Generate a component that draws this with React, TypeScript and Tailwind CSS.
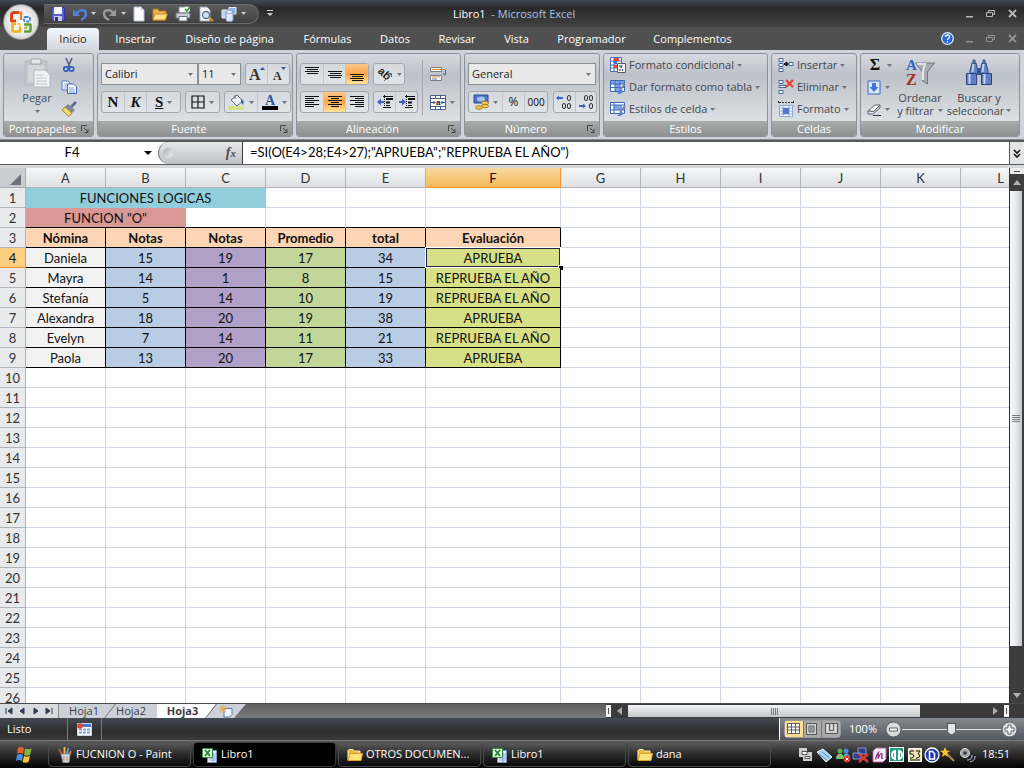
import { useState, type ReactNode } from 'react'
import clsx from 'clsx'

const UI_FONT = "font-['Open_Sans','Noto_Sans',sans-serif]"
const SHEET_FONT = "font-['Lato','Open_Sans',sans-serif]"

const TABS = [
  { label: 'Inicio', width: 'w-[52px]' },
  { label: 'Insertar', width: 'w-[63px]' },
  { label: 'Diseño de página', width: 'w-[115px]' },
  { label: 'Fórmulas', width: 'w-[71px]' },
  { label: 'Datos', width: 'w-[54px]' },
  { label: 'Revisar', width: 'w-[60px]' },
  { label: 'Vista', width: 'w-[49px]' },
  { label: 'Programador', width: 'w-[91px]' },
  { label: 'Complementos', width: 'w-[101px]' },
]

const COLUMNS = ['A', 'B', 'C', 'D', 'E', 'F', 'G', 'H', 'I', 'J', 'K', 'L']

const HEADINGS = ['Nómina', 'Notas', 'Notas', 'Promedio', 'total', 'Evaluación']

const STUDENTS = [
  ['Daniela', '15', '19', '17', '34', 'APRUEBA'],
  ['Mayra', '14', '1', '8', '15', 'REPRUEBA EL AÑO'],
  ['Stefanía', '5', '14', '10', '19', 'REPRUEBA EL AÑO'],
  ['Alexandra', '18', '20', '19', '38', 'APRUEBA'],
  ['Evelyn', '7', '14', '11', '21', 'REPRUEBA EL AÑO'],
  ['Paola', '13', '20', '17', '33', 'APRUEBA'],
]

const COLUMN_FILL = [
  'bg-[#f2f2f2]',
  'bg-[#b8cce4]',
  'bg-[#b1a0c7]',
  'bg-[#c2d69a]',
  'bg-[#b8cce4]',
  'bg-[#d7e087]',
]

const CELL = 'h-5 border-r border-b p-0 text-center align-middle'
const GRID_LINE = 'border-[#d0d7e5]'

/* ---------- small shared pieces ---------- */

function Caret({ className = 'text-[#70757d]' }: { className?: string }) {
  return (
    <svg width="5" height="3" viewBox="0 0 5 3" className={clsx('shrink-0', className)} aria-hidden="true">
      <path d="M0 0h5L2.500 3z" fill="currentColor" />
    </svg>
  )
}

function Icon({ w = 16, h = 16, children }: { w?: number; h?: number; children: ReactNode }) {
  return (
    <svg width={w} height={h} viewBox={`0 0 ${w} ${h}`} className="shrink-0" aria-hidden="true">
      {children}
    </svg>
  )
}

/* ---------- quick access icons ---------- */

function OfficeLogo() {
  return (
    <svg width="24" height="24" viewBox="0 0 24 24" fill="none" strokeLinejoin="round" aria-hidden="true">
      <path d="M10 2.500H5A2.500 2.500 0 0 0 2.500 5v6H7" stroke="#d8441b" strokeWidth="3" />
      <path d="M9.500 2.500h2.500v7.500" stroke="#ee7f2d" strokeWidth="2.400" />
      <rect x="15" y="7" width="6" height="4.500" rx="1.500" stroke="#3a82c8" strokeWidth="1.800" strokeDasharray="3 1" />
      <path d="M7 14H3.500v6A1.500 1.500 0 0 0 5 21.500h6V17" stroke="#f2b21d" strokeWidth="2.600" />
      <path d="M8 14h3v3" stroke="#f7cf62" strokeWidth="1.800" />
      <path d="M15 14.500h6.500V20a1.500 1.500 0 0 1-1.500 1.500h-5" stroke="#5f9f38" strokeWidth="2.600" />
      <path d="M15 18h2.500v-2" stroke="#a3c957" strokeWidth="1.800" />
    </svg>
  )
}

function SaveIcon() {
  return (
    <Icon>
      <path d="M1.500 1.500h13v13h-13z" fill="#5a5fc9" stroke="#3436a0" />
      <path d="M4 1h8v7H4z" fill="#f4f6ff" />
      <path d="M4 10h8v5H4z" fill="#c9cdf4" />
      <path d="M5 11h3v4H5z" fill="#2c2f86" />
    </Icon>
  )
}

function UndoIcon() {
  return (
    <Icon w={14}>
      <path d="M4 7c2-4 9-4 9 1 0 3-3 5-5 6" fill="none" stroke="#4f83dd" strokeWidth="2.400" />
      <path d="M0 3v7h7z" fill="#4f83dd" />
    </Icon>
  )
}

function RedoIcon() {
  return (
    <Icon w={14}>
      <path d="M10 7C8 3 1 3 1 8c0 3 3 5 5 6" fill="none" stroke="#9b9b9b" strokeWidth="2.400" />
      <path d="M13 3v7H6z" fill="#9b9b9b" />
    </Icon>
  )
}

function NewIcon() {
  return (
    <Icon w={12}>
      <path d="M1 1h7l3 3v11H1z" fill="#fff" stroke="#b4c0d3" />
      <path d="M8 1v3h3z" fill="#b7c6de" />
    </Icon>
  )
}

function FolderIcon() {
  return (
    <Icon>
      <path d="M1 3h5l1 2h7v9H1z" fill="#f0b545" stroke="#b67c1c" />
      <path d="M3 8h12.500L13 14H1z" fill="#ffe08a" stroke="#c58f2a" />
    </Icon>
  )
}

// Closed yellow folder used by Explorer windows
function ExplorerIcon() {
  return (
    <Icon>
      <path d="M1 3.500L2 2.500h4l1.500 1.500H13v9H1z" fill="#e9b73c" stroke="#fff3b5" />
      <path d="M3 6.500h12.500L14 13.500H1z" fill="#ffe37a" stroke="#d9a42e" />
    </Icon>
  )
}

function QuickPrintIcon() {
  return (
    <Icon>
      <path d="M4 1h7v6H4z" fill="#fff" stroke="#8a8f98" />
      <path d="M1 7h14v5H1z" fill="#c7ccd4" stroke="#6f7680" />
      <path d="M4 10.500h8v4.500H4z" fill="#f3f5f8" stroke="#6f7680" />
      <circle cx="12" cy="3.500" r="3" fill="#eef7ea" />
      <path d="M10 3l2 2 3-4" fill="none" stroke="#2e9a32" strokeWidth="1.500" />
    </Icon>
  )
}

function PreviewIcon() {
  return (
    <Icon>
      <path d="M2 1h7l3 3v11H2z" fill="#fff" stroke="#93a3bd" />
      <circle cx="8" cy="9" r="3.500" fill="#cfe2f8" stroke="#5a6f91" strokeWidth="1.300" />
      <path d="M11 12l4 3" stroke="#d09030" strokeWidth="2.400" />
    </Icon>
  )
}

function ShapesIcon() {
  return (
    <Icon>
      <path d="M1 4h6v8H1z" fill="#b9d1f3" stroke="#e6effc" />
      <path d="M8 1.500h7V8H8z" fill="#8fb3ea" stroke="#e6effc" />
      <path d="M5 6v8c0 2 7 2 7 0V6z" fill="#dce8fa" stroke="#7c9ccb" />
      <ellipse cx="8.500" cy="6" rx="3.500" ry="1.500" fill="#fff" stroke="#7c9ccb" />
    </Icon>
  )
}

function WindowButtons({ muted = false }: { muted?: boolean }) {
  return (
    <div className={clsx('flex items-center gap-3', muted ? 'text-[#929292]' : 'text-[#b8b8b8]')}>
      <button type="button" aria-label="Minimizar">
        <Icon w={8} h={10}>
          <path d="M0 7h7v1.500H0z" fill="currentColor" />
        </Icon>
      </button>
      <button type="button" aria-label="Restaurar">
        <Icon w={10} h={10}>
          <path d="M2.500 3V1.500h6v4H7M.5 3.500h6v4h-6z" fill="none" stroke="currentColor" />
        </Icon>
      </button>
      <button type="button" aria-label="Cerrar">
        <Icon w={9} h={10}>
          <path d="M1 1l7 7M8 1L1 8" stroke="currentColor" strokeWidth="1.800" />
        </Icon>
      </button>
    </div>
  )
}

function TitleBar() {
  const quick = [
    { name: 'Guardar', icon: <SaveIcon /> },
    { name: 'Deshacer', icon: <UndoIcon />, caret: true },
    { name: 'Rehacer', icon: <RedoIcon />, caret: true },
    { name: 'Nuevo', icon: <NewIcon /> },
    { name: 'Abrir', icon: <FolderIcon /> },
    { name: 'Impresión rápida', icon: <QuickPrintIcon /> },
    { name: 'Vista preliminar', icon: <PreviewIcon /> },
    { name: 'Formas', icon: <ShapesIcon />, caret: true },
  ]
  return (
    <div className="flex h-[27px] shrink-0 items-center bg-linear-to-b from-[#414855] via-[#292929] via-30% to-[#434343] pr-[7px] pl-11">
      <div className="flex h-5 items-center gap-[7px] rounded-r-full border border-l-0 border-[#6a6a6a] bg-linear-to-b from-[#5b5b5b] to-[#414141] pr-3 pl-1.5">
        {quick.map(({ name, icon, caret }) => (
          <button key={name} type="button" aria-label={name} className="flex items-center gap-1">
            {icon}
            {caret && <Caret className="text-[#d0d0d0]" />}
          </button>
        ))}
      </div>
      <button type="button" aria-label="Personalizar barra" className="ml-2">
        <Icon w={6} h={7}>
          <path d="M0 0h6v1H0zM0 3h6L3 6z" fill="#d0d0d0" />
        </Icon>
      </button>
      <h1 className="mr-auto ml-[180px] pt-0.5 text-[11px] whitespace-nowrap text-white">
        Libro1 <span className="text-[#a9c3ec]">&nbsp;- Microsoft Excel</span>
      </h1>
      <WindowButtons />
    </div>
  )
}

function TabStrip() {
  const [active, setActive] = useState('Inicio')
  return (
    <nav className="flex h-[23px] shrink-0 items-end bg-[#505050] pr-[7px] pl-[47px]">
      <div role="tablist" className="flex gap-[5px]">
        {TABS.map(({ label, width }) => (
          <button
            key={label}
            type="button"
            role="tab"
            aria-selected={active === label}
            onClick={() => setActive(label)}
            className={clsx(
              'h-[22px] rounded-t text-[11px] whitespace-nowrap',
              width,
              active === label
                ? 'bg-linear-to-b from-[#f4f7fa] to-[#d3d7de] text-[#1e1e1e]'
                : 'text-white',
            )}
          >
            {label}
          </button>
        ))}
      </div>
      <div className="ml-auto flex items-center gap-3 self-center">
        <button type="button" aria-label="Ayuda">
          <Icon w={13} h={13}>
            <circle cx="6.500" cy="6.500" r="5.800" fill="#2c66cf" stroke="#e8f0ff" strokeWidth="1.200" />
            <path d="M4.500 5c0-2.600 4-2.600 4 0 0 1.500-2 1.500-2 3" fill="none" stroke="#fff" strokeWidth="1.400" />
            <path d="M5.800 9h1.400v1.400H5.800z" fill="#fff" />
          </Icon>
        </button>
        <WindowButtons muted />
      </div>
    </nav>
  )
}

/* ---------- ribbon ---------- */

type GroupProps = { title: string; width: string; launcher?: boolean; children: ReactNode }

function RibbonGroup({ title, width, launcher, children }: GroupProps) {
  return (
    <section
      aria-label={title}
      className={clsx(
        'flex h-[84px] shrink-0 flex-col overflow-hidden rounded-[3px] border border-[#8d9299] bg-linear-to-b from-[#d6d9df] via-[#bdc1ca] via-25% to-[#e6ebec]',
        width,
      )}
    >
      <div className="flex min-h-0 flex-1">{children}</div>
      <div className="flex h-[15px] shrink-0 items-center bg-linear-to-b from-[#a9acab] to-[#8e9190] text-[11px] text-white">
        <span className="flex-1 text-center leading-[15px]">{title}</span>
        {launcher && (
          <button type="button" aria-label={`Opciones de ${title}`} className="mr-1">
            <Icon w={8} h={8}>
              <path d="M.5 6V.5H6M3 3l4 4M7 4v3.500H3.500" fill="none" stroke="#45484b" />
            </Icon>
          </button>
        )}
      </div>
    </section>
  )
}

function ButtonBox({ width, children }: { width: string; children: ReactNode }) {
  return (
    <div
      className={clsx(
        'flex h-[22px] shrink-0 divide-x divide-[#c3c7cd] overflow-hidden rounded-[3px] border border-[#a3a8b0] bg-linear-to-b from-[#d5d9de] to-[#dfe5e8]',
        width,
      )}
    >
      {children}
    </div>
  )
}

type ToolProps = { name: string; on?: boolean; caret?: boolean; children: ReactNode }

function Tool({ name, on, caret, children }: ToolProps) {
  return (
    <button
      type="button"
      aria-label={name}
      aria-pressed={on}
      className={clsx(
        'flex min-w-0 items-center justify-center',
        caret ? 'flex-[3] gap-1' : 'flex-[2]',
        on && 'bg-linear-to-b from-[#fbc98a] via-[#fba548] to-[#fee59a]',
      )}
    >
      {children}
      {caret && <Caret />}
    </button>
  )
}

function Combo({ label, value, width }: { label: string; value: string; width: string }) {
  return (
    <div className={clsx('flex h-[22px] shrink-0 items-center border border-[#8b8f96] bg-[#e8e8e8] pr-1', width)}>
      <select
        aria-label={label}
        className="h-full min-w-0 flex-1 appearance-none pl-[3px] text-[11px] text-[#1e1e1e] outline-none"
      >
        <option>{value}</option>
      </select>
      <Caret />
    </div>
  )
}

function Lines({ rows, top = 0 }: { rows: [number, number][]; top?: number }) {
  return (
    <Icon w={14} h={14}>
      {rows.map(([x, w], i) => (
        <rect key={i} x={x} y={top + i * 2} width={w} height="1" fill="#111" />
      ))}
    </Icon>
  )
}

function Indent({ right }: { right?: boolean }) {
  return (
    <Icon w={16} h={14}>
      <path d="M6 1.500h10M9 10.500h4M6 12.500h8" stroke="#111" />
      <path d="M9 4h7M9 7.500h4" stroke="#111" strokeWidth="2" />
      <path d="M7.500 0v14" stroke="#111" strokeDasharray="1 1" />
      {right ? (
        <path d="M0 6h3V3.500l4 3.500-4 3.500V8H0z" fill="#3c63c4" />
      ) : (
        <path d="M7 6H4V3.500L0 7l4 3.500V8h3z" fill="#3c63c4" />
      )}
    </Icon>
  )
}

function Clipboard() {
  return (
    <RibbonGroup title="Portapapeles" width="w-[91px]" launcher>
      <button type="button" className="ml-[14px] flex w-[38px] flex-col items-center pt-1 text-[11px] text-[#4a4d52]">
        <Icon w={28} h={30}>
          <path d="M2 3h22v24H2z" fill="#c3c7cc" stroke="#b4b8be" />
          <path d="M8 1h10v5H8z" fill="#e4e6e9" stroke="#9da1a8" />
          <path d="M5 7h16v17H5z" fill="#d3d6da" />
          <path d="M11 12h11l5 5v12H11z" fill="#f2f3f5" stroke="#b4b8be" />
          <path d="M13 17h7M13 20h11M13 23h11M13 26h11" stroke="#c0c4ca" />
        </Icon>
        <span className="mt-0.5 leading-4">Pegar</span>
        <Caret className="mt-1 text-[#70757d]" />
      </button>
      <div className="ml-[5px] flex flex-col items-center">
        <button type="button" aria-label="Cortar" className="flex h-[22px] items-center">
          <Icon w={16} h={16}>
            <path d="M5 1l4 9M11 1L7 10" stroke="#55617a" strokeWidth="1.600" />
            <circle cx="5" cy="12" r="2.200" fill="none" stroke="#2f5fc0" strokeWidth="1.700" />
            <circle cx="10.500" cy="12" r="2.200" fill="none" stroke="#2f5fc0" strokeWidth="1.700" />
          </Icon>
        </button>
        <button type="button" aria-label="Copiar" className="flex h-[22px] items-center">
          <Icon w={16} h={14}>
            <path d="M1 1h6l2 2v7H1z" fill="#fff" stroke="#4a74c4" />
            <path d="M2.500 4h5M2.500 6h5M2.500 8h5" stroke="#8aaae2" />
            <path d="M6.500 4h6l3 3v6.500h-9z" fill="#fff" stroke="#3563bd" />
            <path d="M8 8h5M8 10h6M8 12h6" stroke="#6f96dc" />
          </Icon>
        </button>
        <button type="button" aria-label="Copiar formato" className="flex h-[22px] items-center">
          <Icon w={16} h={16}>
            <path d="M15 1l-5 5" stroke="#586a90" strokeWidth="2.600" />
            <path d="M7 3l7 6-3 3-7-6z" fill="#7f88a0" />
            <path d="M4 6l7 6-3 3.500L1 9z" fill="#f5d96b" stroke="#a5842a" />
          </Icon>
        </button>
      </div>
    </RibbonGroup>
  )
}

function FontGroup() {
  return (
    <RibbonGroup title="Fuente" width="w-[196px]" launcher>
      <div className="flex flex-col gap-1.5 pt-[9px] pl-[3px]">
        <div className="flex gap-1">
          <div className="flex">
            <Combo label="Fuente" value="Calibri" width="w-[97px]" />
            <Combo label="Tamaño de fuente" value="11" width="w-[43px]" />
          </div>
          <ButtonBox width="w-[45px]">
            <Tool name="Aumentar tamaño">
              <Icon w={18} h={16}>
                <text x="1" y="14" fontSize="16" fontWeight="700" fontFamily="Liberation Serif, serif" fill="#333">A</text>
                <path d="M12 4h5l-2.500-3z" fill="#35549b" />
              </Icon>
            </Tool>
            <Tool name="Disminuir tamaño">
              <Icon w={16} h={16}>
                <text x="2" y="14" fontSize="12" fontWeight="700" fontFamily="Liberation Serif, serif" fill="#333">A</text>
                <path d="M10 1h5l-2.500 3z" fill="#35549b" />
              </Icon>
            </Tool>
          </ButtonBox>
        </div>
        <div className="flex gap-1 font-['Liberation_Serif',serif] text-[15px] leading-4 text-[#111]">
          <ButtonBox width="w-20">
            <Tool name="Negrita"><b>N</b></Tool>
            <Tool name="Cursiva"><b className="italic">K</b></Tool>
            <Tool name="Subrayado" caret><b className="underline">S</b></Tool>
          </ButtonBox>
          <ButtonBox width="w-[35px]">
            <Tool name="Bordes" caret>
              <Icon w={14} h={14}>
                <path d="M1 1h12v12H1zM7 1v12M1 7h12" fill="none" stroke="#111" strokeWidth="1.200" />
              </Icon>
            </Tool>
          </ButtonBox>
          <ButtonBox width="w-[67px]">
            <Tool name="Color de relleno" caret>
              <Icon w={17} h={16}>
                <path d="M3 6l6-5 6 6-6 5z" fill="#eef2f8" stroke="#5d6a83" />
                <path d="M7 5V1" stroke="#5d6a83" />
                <path d="M13 5c3 1 3 3 2 6l-2-3z" fill="#315db8" />
                <path d="M0 12h16v4H0z" fill="#d7e087" />
              </Icon>
            </Tool>
            <Tool name="Color de fuente" caret>
              <Icon w={16} h={16}>
                <text x="3" y="11" fontSize="14" fontWeight="700" fontFamily="Liberation Serif, serif" fill="#35549b">A</text>
                <path d="M0 12h16v4H0z" fill="#000" />
              </Icon>
            </Tool>
          </ButtonBox>
        </div>
      </div>
    </RibbonGroup>
  )
}

function AlignGroup() {
  return (
    <RibbonGroup title="Alineación" width="w-[165px]" launcher>
      <div className="flex flex-col gap-1.5 pt-[9px] pl-[3px]">
        <div className="flex gap-1">
          <ButtonBox width="w-[69px]">
            <Tool name="Alinear arriba"><Lines rows={[[0, 14], [2, 11], [0, 14], [2, 11]]} /></Tool>
            <Tool name="Alinear al medio"><Lines top={4} rows={[[0, 14], [2, 11], [0, 14], [2, 11]]} /></Tool>
            <Tool name="Alinear abajo" on><Lines top={7} rows={[[0, 14], [2, 11], [0, 14], [2, 11]]} /></Tool>
          </ButtonBox>
          <ButtonBox width="w-8">
            <Tool name="Orientación" caret>
              <Icon w={16} h={16}>
                <text x="0" y="9" fontSize="11" fontWeight="700" fontFamily="Liberation Sans, sans-serif" fill="#222" transform="rotate(42 4 8)">
                  ab
                </text>
                <path d="M7 15l7-7M14.500 11V7.500H11" stroke="#666" fill="none" />
              </Icon>
            </Tool>
          </ButtonBox>
        </div>
        <div className="flex gap-1">
          <ButtonBox width="w-[69px]">
            <Tool name="Izquierda"><Lines top={1} rows={[[0, 14], [0, 9], [0, 14], [0, 9], [0, 14], [0, 9]]} /></Tool>
            <Tool name="Centrar" on><Lines top={1} rows={[[0, 14], [3, 8], [0, 14], [3, 8], [0, 14], [3, 8]]} /></Tool>
            <Tool name="Derecha"><Lines top={1} rows={[[0, 14], [5, 9], [0, 14], [5, 9], [0, 14], [5, 9]]} /></Tool>
          </ButtonBox>
          <ButtonBox width="w-[45px]">
            <Tool name="Disminuir sangría"><Indent /></Tool>
            <Tool name="Aumentar sangría"><Indent right /></Tool>
          </ButtonBox>
        </div>
      </div>
      <div className="my-1.5 ml-1 flex flex-col gap-1.5 border-l border-[#a5a9b0] pt-[3px] pl-[7px]">
        <button type="button" aria-label="Ajustar texto" className="flex h-[22px] items-center">
          <Icon w={16} h={16}>
            <path d="M.5 1.500h11v4H.5zM.5 9.500h11v5H.5z" fill="#fff" stroke="#777d88" />
            <path d="M2 3.500h13M2 11h8" stroke="#d38b3c" />
            <path d="M2 13h5" stroke="#5c77a8" />
            <path d="M15.500 4v5M13 7l2 2.500" stroke="#4c6491" fill="none" />
          </Icon>
        </button>
        <button type="button" aria-label="Combinar y centrar" className="flex h-[22px] items-center gap-1">
          <Icon w={16} h={15}>
            <path d="M.5.5h15v14H.5zM.5 3.500h15M.5 11.500h15M5.500.5v3M10.500.5v3M5.500 11.500v3M10.500 11.500v3" fill="#fff" stroke="#4c5f86" />
            <path d="M1 7.500h4M15 7.500h-4M3.500 6L5 7.500 3.500 9M12.500 6L11 7.500l1.500 1.500" fill="none" stroke="#294b94" />
            <text x="6" y="10" fontSize="8" fontWeight="700" fontFamily="Liberation Sans, sans-serif" fill="#111">a</text>
          </Icon>
          <Caret />
        </button>
      </div>
    </RibbonGroup>
  )
}

function NumberGroup() {
  return (
    <RibbonGroup title="Número" width="w-[136px]" launcher>
      <div className="flex flex-col gap-1.5 pt-[9px] pl-[3px]">
        <Combo label="Formato de número" value="General" width="w-32" />
        <div className="flex gap-1 text-[#222]">
          <ButtonBox width="w-20">
            <Tool name="Formato de contabilidad" caret>
              <Icon w={16} h={16}>
                <path d="M1 1h14v8H1z" fill="#4d77c8" stroke="#2b4b91" />
                <ellipse cx="8" cy="5" rx="4" ry="2.500" fill="#a9c1ee" />
                <ellipse cx="12" cy="9" rx="3.500" ry="1.800" fill="#f4cf61" stroke="#a67a1b" />
                <ellipse cx="12" cy="12" rx="3.500" ry="1.800" fill="#f4cf61" stroke="#a67a1b" />
                <ellipse cx="6" cy="13.500" rx="3.500" ry="1.800" fill="#f4cf61" stroke="#a67a1b" />
              </Icon>
            </Tool>
            <Tool name="Estilo porcentual"><span className="text-xs">%</span></Tool>
            <Tool name="Estilo millares">
              <span className="font-['Liberation_Sans_Narrow','Noto_Sans',sans-serif] text-[10px]">000</span>
            </Tool>
          </ButtonBox>
          <div className="ml-px">
            <ButtonBox width="w-11">
              <Tool name="Aumentar decimales">
                <Icon w={16} h={16}>
                  <path d="M0 4l3-2.500V3h4v2H3v1.500z" fill="#3c63c4" />
                  <g fill="none" stroke="#333">
                    <rect x="11.500" y="1.500" width="3" height="5" rx="1.500" />
                    <rect x="6.500" y="9.500" width="3" height="5" rx="1.500" />
                    <rect x="11.500" y="9.500" width="3" height="5" rx="1.500" />
                  </g>
                </Icon>
              </Tool>
              <Tool name="Disminuir decimales">
                <Icon w={16} h={16}>
                  <path d="M8 12l-3-2.500V11H1v2h4v1.500z" fill="#3c63c4" />
                  <g fill="none" stroke="#333">
                    <rect x="6.500" y="1.500" width="3" height="5" rx="1.500" />
                    <rect x="11.500" y="1.500" width="3" height="5" rx="1.500" />
                    <rect x="11.500" y="9.500" width="3" height="5" rx="1.500" />
                  </g>
                </Icon>
              </Tool>
            </ButtonBox>
          </div>
        </div>
      </div>
    </RibbonGroup>
  )
}

function RowButton({ icon, label }: { icon: ReactNode; label: string }) {
  return (
    <button type="button" className="flex h-[22px] items-center gap-[3px] text-[11px] whitespace-nowrap text-[#44474c]">
      {icon}
      <span>{label}</span>
      <Caret className="text-[#70757d]" />
    </button>
  )
}

function StylesGroup() {
  return (
    <RibbonGroup title="Estilos" width="w-[165px]">
      <div className="flex flex-col pl-1.5">
        <RowButton
          label="Formato condicional"
          icon={
            <Icon>
              <path d="M.5.5h11v14H.5zM.5 4h11M.5 8h11M.5 11h11M4 .5v14" fill="#fff" stroke="#4a6fb5" />
              <path d="M4 1h5v3H4z" fill="#d84a3e" />
              <path d="M4 4h3v3H4z" fill="#3f70cf" />
              <path d="M4 8h4v3H4z" fill="#d84a3e" />
              <path d="M7.500 6.500h8v9h-8z" fill="#f5f6f8" stroke="#555b66" />
              <path d="M9 9h2M12 8l-1 3M9 13h2M13 12l-1 2" stroke="#333" />
            </Icon>
          }
        />
        <RowButton
          label="Dar formato como tabla"
          icon={
            <Icon>
              <path d="M.5 1.500h14v11H.5z" fill="#fff" stroke="#3c68b8" />
              <path d="M1 2h13v3H1zM5 5h5v7H5z" fill="#7ea4e4" />
              <path d="M.5 5h14M.5 8.500h14M5 1.500v11M10 1.500v11" stroke="#3c68b8" />
              <path d="M15 5l-5 6" stroke="#7a879e" strokeWidth="2" />
              <path d="M11 10l2 2c-1 3-3 3-6 3 2-1 2-4 4-5z" fill="#4f83dd" />
            </Icon>
          }
        />
        <RowButton
          label="Estilos de celda"
          icon={
            <Icon>
              <path d="M.5 1.500h14v11H.5z" fill="#fff" stroke="#3c68b8" />
              <path d="M4 4h8v5H4z" fill="#7ea4e4" />
              <path d="M.5 4h14M.5 9h14M4 1.500v11" stroke="#3c68b8" />
              <path d="M15 5l-5 6" stroke="#7a879e" strokeWidth="2" />
              <path d="M11 10l2 2c-1 3-3 3-6 3 2-1 2-4 4-5z" fill="#4f83dd" />
            </Icon>
          }
        />
      </div>
    </RibbonGroup>
  )
}

function CellsGroup() {
  return (
    <RibbonGroup title="Celdas" width="w-[86px]">
      <div className="flex flex-col pl-1.5">
        <RowButton
          label="Insertar"
          icon={
            <Icon>
              <path d="M1 1.500h4v3H1zM1 6.500h4v3H1zM1 11.500h4v3H1zM11 5.500h4v3h-4z" fill="#fff" stroke="#44659f" />
              <path d="M6 7l3-2v4zM8 7h3" fill="#111" stroke="#111" />
            </Icon>
          }
        />
        <RowButton
          label="Eliminar"
          icon={
            <Icon>
              <path d="M1 1.500h4v3H1zM1 6.500h7v2H1zM1 11.500h4v3H1z" fill="#fff" stroke="#44659f" />
              <path d="M8 1l7 7M15 1L8 8" stroke="#e2452d" strokeWidth="2.200" />
            </Icon>
          }
        />
        <RowButton
          label="Formato"
          icon={
            <Icon>
              <path d="M.5 0v3M15.500 0v3M1 1.500h14" stroke="#333" strokeDasharray="2 1" />
              <path d="M1.500 4.500h13v11h-13z" fill="#fff" stroke="#8aa7d8" />
              <path d="M1.500 7h13M1.500 10h13M1.500 13h13M5 4.500v11M11 4.500v11" stroke="#8aa7d8" />
              <path d="M5 7h6v6H5z" fill="#4d7bd0" />
            </Icon>
          }
        />
      </div>
    </RibbonGroup>
  )
}

function EditGroup() {
  return (
    <RibbonGroup title="Modificar" width="w-[160px]">
      <div className="flex w-9 flex-col pl-1.5">
        <button type="button" aria-label="Autosuma" className="flex h-[22px] items-center gap-1">
          <span className="w-4 text-center font-['Liberation_Serif',serif] text-base leading-5 font-bold text-[#111]">Σ</span>
          <Caret />
        </button>
        <button type="button" aria-label="Rellenar" className="flex h-[22px] items-center gap-1">
          <Icon w={14} h={15}>
            <path d="M1 1h12v13H1z" fill="#dbe7fb" stroke="#3a66b8" />
            <path d="M5 3h4v4h2.500L7 12 2.500 7H5z" fill="#3f74d8" />
          </Icon>
          <Caret />
        </button>
        <button type="button" aria-label="Borrar" className="flex h-[22px] items-center gap-1">
          <Icon w={14} h={13}>
            <path d="M1 8l7-6h5L7 8.500z" fill="#fff" stroke="#5b6270" />
            <path d="M1 8v3h5l7-6V2L7 8.500z" fill="#dfe6f1" stroke="#5b6270" />
            <path d="M6 12.500h8" stroke="#333" />
          </Icon>
          <Caret />
        </button>
      </div>
      <button type="button" className="flex w-[46px] flex-col items-center pt-1 text-[11px] leading-[13px] text-[#44474c]">
        <Icon w={30} h={31}>
          <text x="1" y="12" fontSize="15" fontWeight="700" fontFamily="Liberation Serif, serif" fill="#3563bd">A</text>
          <text x="1" y="27" fontSize="16" fontWeight="700" fontFamily="Liberation Serif, serif" fill="#a3312c">Z</text>
          <path d="M10.500 5h19l-7 9v12l-5-3v-9z" fill="#a8abb0" stroke="#74777c" />
          <path d="M12 6h8l-2 7v9" fill="none" stroke="#e4e6e9" strokeWidth="2" />
        </Icon>
        <span className="mt-0.5">Ordenar</span>
        <span className="flex items-center gap-1 whitespace-nowrap">y filtrar <Caret /></span>
      </button>
      <button type="button" className="flex w-[72px] flex-col items-center pt-1 text-[11px] leading-[13px] text-[#44474c]">
        <Icon w={28} h={31}>
          <path d="M7 5h4l2 8v3H5v-3zM17 5h4l2 8v3h-8v-3z" fill="#6584c2" stroke="#324c86" />
          <path d="M8 2h2v3H8zM18 2h2v3h-2z" fill="#8ea6d6" stroke="#324c86" />
          <path d="M1.500 15.500h10v11h-10zM16.500 15.500h10v11h-10z" fill="#5f80c4" stroke="#2b447c" />
          <path d="M4.500 16v10M19.500 16v10M8.500 6l-1 8M18.500 6l-1 8" stroke="#c3d3f2" strokeWidth="2" />
          <path d="M12 10h4v7h-4z" fill="#3b568f" />
        </Icon>
        <span className="mt-0.5">Buscar y</span>
        <span className="flex items-center gap-0.5 whitespace-nowrap">seleccionar <Caret /></span>
      </button>
    </RibbonGroup>
  )
}

/* ---------- formula bar ---------- */

function FormulaBar() {
  return (
    <div className={clsx('flex h-[25px] shrink-0 border-t-2 border-b border-[#565a58] bg-[#d6d8dc]', SHEET_FONT)}>
      <div className="flex w-[158px] shrink-0 items-center bg-white pr-1.5">
        <input
          aria-label="Cuadro de nombres"
          defaultValue="F4"
          className="min-w-0 flex-1 text-center text-[13px] outline-none"
        />
        <svg width="8" height="4" viewBox="0 0 8 4" aria-hidden="true">
          <path d="M0 0h8L4 4z" fill="#000" />
        </svg>
      </div>
      <div className="flex w-[85px] shrink-0 items-center border-r border-[#3b3b3b] bg-white">
        <div className="flex h-full flex-1 items-center justify-between rounded-l-full border-l border-[#777] bg-linear-to-b from-[#e6e7e9] to-[#bfc1c5] pr-1.5 pl-1">
          <span className="size-2.5 rounded-full bg-linear-to-br from-[#a9abb0] to-[#f4f4f4]" />
          <button type="button" aria-label="Insertar función" className="font-['Liberation_Serif',serif] text-sm leading-4 font-bold text-[#4c4c4c] italic">
            f<span className="text-[11px]">x</span>
          </button>
        </div>
      </div>
      <input
        aria-label="Barra de fórmulas"
        defaultValue={'=SI(O(E4>28;E4>27);"APRUEBA";"REPRUEBA EL AÑO")'}
        className="min-w-0 flex-1 bg-white pl-[7px] text-[13px] outline-none"
      />
      <button type="button" aria-label="Expandir" className="flex w-[15px] shrink-0 items-center justify-center border-l border-[#555] bg-[#e3e4e6]">
        <Icon w={8} h={9}>
          <path d="M1 1l3 3 3-3M1 5l3 3 3-3" fill="none" stroke="#111" strokeWidth="1.600" />
        </Icon>
      </button>
    </div>
  )
}

/* ---------- worksheet ---------- */

function EmptyCells({ from, row }: { from: number; row: number }) {
  return COLUMNS.slice(from).map((col, i) => (
    <td
      key={col}
      className={clsx(CELL, row === 2 && from + i < 6 ? 'border-r-[#d0d7e5] border-b-black' : GRID_LINE)}
    />
  ))
}

function RowCells({ row }: { row: number }) {
  if (row === 1) {
    return (
      <>
        <td colSpan={3} className={clsx(CELL, 'border-[#92cddc] bg-[#92cddc]')}>FUNCIONES LOGICAS</td>
        <EmptyCells from={3} row={row} />
      </>
    )
  }
  if (row === 2) {
    return (
      <>
        <td colSpan={2} className={clsx(CELL, 'border-r-[#d99795] border-b-black bg-[#d99795]')}>FUNCION "O"</td>
        <EmptyCells from={2} row={row} />
      </>
    )
  }
  if (row === 3) {
    return (
      <>
        {HEADINGS.map((text, i) => (
          <td key={i} className={clsx(CELL, 'border-black bg-[#fcd5b4] font-bold')}>{text}</td>
        ))}
        <EmptyCells from={6} row={row} />
      </>
    )
  }
  const student = STUDENTS[row - 4]
  if (!student) return <EmptyCells from={0} row={row} />
  return (
    <>
      {student.map((text, i) => (
        <td key={i} className={clsx(CELL, 'relative border-black', COLUMN_FILL[i])}>
          {text}
          {row === 4 && i === 5 && (
            <>
              <span className="absolute inset-0 border border-[#25254a] outline outline-white" />
              <span className="absolute -right-[3px] -bottom-[3px] size-[5px] border-t border-l border-white bg-black" />
            </>
          )}
        </td>
      ))}
      <EmptyCells from={6} row={row} />
    </>
  )
}

function Worksheet() {
  return (
    <div className="min-w-0 flex-1 overflow-hidden bg-white">
      <table className={clsx('w-[1041px] table-fixed border-separate border-spacing-0 text-[13px] leading-[18px] text-[#111]', SHEET_FONT)}>
        <colgroup>
          <col className="w-[26px]" />
          {COLUMNS.map((col) => (
            <col key={col} className={col === 'F' ? 'w-[135px]' : 'w-20'} />
          ))}
        </colgroup>
        <thead>
          <tr>
            <th className={clsx(CELL, 'border-[#a8abb0] bg-[#c9ccd1]')}>
              <svg width="11" height="11" viewBox="0 0 11 11" className="mt-1 mr-1 ml-auto" aria-hidden="true">
                <path d="M11 0v11H0z" fill="#6d7177" />
              </svg>
            </th>
            {COLUMNS.map((col) => (
              <th
                key={col}
                scope="col"
                className={clsx(
                  CELL,
                  'font-normal',
                  col === 'F'
                    ? 'border-[#f29536] bg-linear-to-b from-[#f9d99f] to-[#f5b95a]'
                    : 'border-[#b1b5ba] bg-linear-to-b from-[#f6f7f8] to-[#dddfe2] text-[#333]',
                )}
              >
                {col}
              </th>
            ))}
          </tr>
        </thead>
        <tbody>
          {Array.from({ length: 26 }, (_, i) => i + 1).map((row) => (
            <tr key={row}>
              <th
                scope="row"
                className={clsx(
                  CELL,
                  'font-normal',
                  row === 4 ? 'border-[#f29536] bg-[#fdcf80]' : 'border-[#b1b5ba] bg-[#e8eaec] text-[#333]',
                )}
              >
                {row}
              </th>
              <RowCells row={row} />
            </tr>
          ))}
        </tbody>
      </table>
    </div>
  )
}

function VerticalScroll() {
  return (
    <div className="flex w-[15px] shrink-0 flex-col border-l border-[#2e2e2e] bg-[#3d3d3d]">
      <div className="flex h-[6px] items-center justify-center bg-[#e9eaec]">
        <span className="h-px w-1.5 bg-[#444]" />
      </div>
      <button type="button" aria-label="Subir" className="flex h-[17px] items-center justify-center">
        <Icon w={8} h={5}><path d="M0 5h8L4 0z" fill="#b3b3b3" /></Icon>
      </button>
      <div className="mr-0.5 flex flex-[455] flex-col items-center justify-center gap-px bg-linear-to-r from-[#f5f6f7] via-[#e8eaeb] to-[#c3c6ca]">
        <span className="h-px w-2 bg-[#77797d]" />
        <span className="h-px w-2 bg-[#77797d]" />
        <span className="h-px w-2 bg-[#77797d]" />
        <span className="h-px w-2 bg-[#77797d]" />
      </div>
      <div className="flex-[41]" />
      <button type="button" aria-label="Bajar" className="flex h-4 items-center justify-center">
        <Icon w={8} h={5}><path d="M0 0h8L4 5z" fill="#b3b3b3" /></Icon>
      </button>
    </div>
  )
}

function SheetTabs() {
  const nav = ['M1 1v6M7 1L3 4l4 3z', 'M6 1L2 4l4 3z', 'M2 1l4 3-4 3z', 'M7 1v6M1 1l4 3-4 3z']
  return (
    <div className="flex h-[15px] shrink-0 border-t border-[#4b4b4b] bg-linear-to-b from-[#5e5e5e] to-[#7a7a7a] text-[11px] leading-[14px] text-[#3b3e43]">
      <div className="flex min-w-0 flex-[606]">
        <div className="flex w-[59px] shrink-0 items-center justify-around border-r border-[#888] bg-[#d8dbe0] px-0.5">
          {nav.map((d) => (
            <button key={d} type="button" aria-label="Desplazar hojas">
              <Icon w={8} h={8}><path d={d} fill="#2e3c54" stroke="#2e3c54" /></Icon>
            </button>
          ))}
        </div>
        <button type="button" className="w-14 shrink-0 bg-[#ccd1d9] pr-1.5 [clip-path:polygon(0_0,100%_0,calc(100%-11px)_100%,0_100%)]">Hoja1</button>
        <button type="button" className="-ml-2.5 w-[52px] shrink-0 bg-[#ccd1d9] [clip-path:polygon(11px_0,100%_0,100%_100%,0_100%)]">Hoja2</button>
        <button type="button" className="w-[59px] shrink-0 bg-white pr-2 font-bold [clip-path:polygon(0_0,100%_0,calc(100%-11px)_100%,0_100%)]">Hoja3</button>
        <button type="button" aria-label="Insertar hoja" className="-ml-2.5 flex w-10 shrink-0 items-center justify-center bg-[#ccd1d9] [clip-path:polygon(11px_0,100%_0,calc(100%-12px)_100%,0_100%)]">
          <Icon w={15} h={13}>
            <path d="M5 3.500h8v6L10.500 12H5z" fill="#f2f6fd" stroke="#5a78b0" />
            <path d="M4 0v8M0 4h8M1 1l6 6M7 1L1 7" stroke="#eba63a" />
          </Icon>
        </button>
      </div>
      <div className="flex flex-[418] bg-[#3a3a3a]">
        <span className="my-px flex w-[5px] items-center justify-center bg-[#f0f0f0]">
          <span className="h-1.5 w-px bg-[#555]" />
        </span>
        <button type="button" aria-label="Izquierda" className="flex w-[17px] items-center justify-center">
          <Icon w={5} h={8}><path d="M5 0v8L0 4z" fill="#a8a8a8" /></Icon>
        </button>
        <div className="my-px flex flex-[292] items-center justify-center gap-px bg-linear-to-b from-[#f4f5f6] to-[#c4c7cb]">
          <span className="h-[7px] w-px bg-[#77797d]" />
          <span className="h-[7px] w-px bg-[#77797d]" />
          <span className="h-[7px] w-px bg-[#77797d]" />
          <span className="h-[7px] w-px bg-[#77797d]" />
        </div>
        <div className="flex-[67]" />
        <button type="button" aria-label="Derecha" className="flex w-[17px] items-center justify-center">
          <Icon w={5} h={8}><path d="M0 0v8l5-4z" fill="#a8a8a8" /></Icon>
        </button>
        <span className="my-px flex w-[5px] items-center justify-center bg-[#f0f0f0]">
          <span className="h-1.5 w-px bg-[#555]" />
        </span>
        <span className="w-[15px]" />
      </div>
    </div>
  )
}

/* ---------- status bar and taskbar ---------- */

function StatusBar() {
  const views = [
    { name: 'Normal', on: true, d: 'M.5.5h12v10H.5zM.5 4h12M.5 7h12M4.500.5v10M8.500.5v10' },
    { name: 'Diseño de página', on: false, d: 'M.5.5h10v11H.5zM3 3h5v6H3zM4 5h3M4 7h3' },
    { name: 'Salto de página', on: false, d: 'M.5.5h12v10H.5zM4.500.5v7M8.500.5v7M4.500 7.500h4' },
  ]
  return (
    <div className="flex h-[22px] shrink-0 items-stretch bg-linear-to-b from-[#444a53] via-[#2d2d2d] via-60% to-[#3a3a3a] text-[11px] text-white">
      <div className="flex w-[68px] items-center border-r border-[#777] pl-[7px]">Listo</div>
      <div className="flex w-[34px] items-center justify-center border-r border-[#777]">
        <Icon w={15} h={13}>
          <path d="M.5.5h14v12H.5z" fill="#fff" stroke="#c3d3ef" />
          <path d="M4 1h10v3H4z" fill="#4a78c8" />
          <path d="M2 6.500h11M2 9.500h11" stroke="#7da0dc" strokeWidth="2" strokeDasharray="3 1" />
          <circle cx="3" cy="3" r="2.800" fill="#d9483a" />
        </Icon>
      </div>
      <div className="ml-auto flex w-[245px] items-center border-l border-white bg-linear-to-b from-[#858a90] to-[#54585e] pr-1.5 pl-1">
        <div className="flex h-[18px] w-[57px] divide-x divide-[#777] rounded-sm border border-[#9a9a9a]">
          {views.map(({ name, on, d }) => (
            <button
              key={name}
              type="button"
              aria-label={name}
              aria-pressed={on}
              className={clsx('flex flex-1 items-center justify-center', on ? 'bg-[#fcdc8f] text-[#5a5a5a]' : 'bg-[#a9a9a9] text-[#555]')}
            >
              <Icon w={13} h={12}>
                <path d={d} fill={on ? '#fff' : '#d2d2d2'} stroke="currentColor" />
              </Icon>
            </button>
          ))}
        </div>
        <span className="w-11 text-center">100%</span>
        <button type="button" aria-label="Alejar">
          <Icon w={17} h={17}>
            <circle cx="8.500" cy="8.500" r="7.500" fill="#d9dbde" stroke="#5d6167" />
            <path d="M4.500 7h8v3h-8z" fill="#fff" stroke="#5d6167" />
          </Icon>
        </button>
        <input
          type="range"
          aria-label="Zoom"
          defaultValue={50}
          className="h-4 min-w-0 flex-1 appearance-none bg-[linear-gradient(#e4e4e4,#e4e4e4)] bg-[length:100%_1px] bg-center bg-no-repeat [&::-webkit-slider-thumb]:h-3 [&::-webkit-slider-thumb]:w-[9px] [&::-webkit-slider-thumb]:appearance-none [&::-webkit-slider-thumb]:border [&::-webkit-slider-thumb]:border-[#4f5359] [&::-webkit-slider-thumb]:bg-[#e1e3e5] [&::-webkit-slider-thumb]:[clip-path:polygon(0_0,100%_0,100%_65%,50%_100%,0_65%)]"
        />
        <button type="button" aria-label="Acercar">
          <Icon w={17} h={17}>
            <circle cx="8.500" cy="8.500" r="7.500" fill="#d9dbde" stroke="#5d6167" />
            <path d="M7 4h3v3h3v3h-3v3H7v-3H4V7h3z" fill="#fff" stroke="#5d6167" />
          </Icon>
        </button>
      </div>
    </div>
  )
}

function ExcelIcon() {
  return (
    <Icon>
      <path d="M5.500 3.500h9v12h-9z" fill="#eef3fb" stroke="#6d8fc9" />
      <path d="M7 7h8M7 9h8M7 11h8M7 13h8M11 5v10" stroke="#86a6dc" />
      <path d="M.5 1.500h10v9H.5z" fill="#e9f7e6" stroke="#2f8f3a" />
      <path d="M3 3l5 6M8 3L3 9" stroke="#23842f" strokeWidth="1.800" />
    </Icon>
  )
}

function PaintIcon() {
  return (
    <Icon>
      <path d="M6 9L2 2" stroke="#d94b38" strokeWidth="2" />
      <path d="M7.500 9V0" stroke="#f0b541" strokeWidth="2" />
      <path d="M9.500 9l2-8" stroke="#5a9ad8" strokeWidth="2" />
      <path d="M11 10l3-6" stroke="#c87d3d" strokeWidth="2" />
      <path d="M4 7h9l-1 8.500H6z" fill="#d9e0ea" stroke="#7f8a9a" />
      <path d="M7 9v5M10 9v5" stroke="#c0705a" />
    </Icon>
  )
}

function TrayIcons() {
  return (
    <svg width="180" height="16" viewBox="0 0 180 16" className="shrink-0" aria-hidden="true">
      <path d="M1 1h8v4h5v9H5v-4H1z" fill="#cfcfcf" />
      <path d="M4 4.500h5v3H4zM7 9.500h5v2H7z" fill="#fff" stroke="#555" />
      <path d="M19 5l6-3 9 8-6 5z" fill="#a9d4ee" stroke="#e9f5fc" />
      <path d="M21 7l8 6M24 5l8 6" stroke="#5a9ac4" />
      <circle cx="42" cy="4" r="2.500" fill="#5eb04f" />
      <circle cx="48" cy="4" r="2.500" fill="#4f8be0" />
      <path d="M38 12c0-7 8-7 8 0z" fill="#7cc46a" />
      <path d="M45 11c0-6 7-6 7 0z" fill="#68a9e4" />
      <circle cx="49" cy="12" r="3.500" fill="#da3326" />
      <path d="M47.500 10.500l3 3M50.500 10.500l-3 3" stroke="#fff" />
      <path d="M60 1h8v6h-8zM55 6h8v6h-8z" fill="#2d3f8a" stroke="#8a98d0" />
      <path d="M61 7l9 8M70 7l-9 8" stroke="#e0392e" strokeWidth="2.400" />
      <path d="M75 4l3-3h10v11l-3 3H75z" fill="#f7eef7" stroke="#b064ad" />
      <path d="M77.500 12.500c1-3 1-5 3-7l-.5 6c2-5 4-6 4-4 0 3-1 4 1 4" fill="none" stroke="#8c2f88" strokeWidth="1.300" />
      <path d="M91 0h15v15H91z" fill="#fff" />
      <path d="M92 1h13v13H92z" fill="#249a83" />
      <path d="M97 4c-4 1-4 7 0 8zM101 4c4 1 4 7 0 8z" fill="none" stroke="#fff" strokeWidth="2" />
      <path d="M110.500 1.500h13v13h-13z" fill="#e9e3ae" stroke="#fff" />
      <path d="M116 4h-4v3c5-1 5 5 0 4M118 4h4l-2 3c3 0 2 5-2 4M112 13h10" fill="none" stroke="#111" />
      <circle cx="134" cy="8" r="7" fill="#233bb0" stroke="#fff" strokeWidth="1.300" />
      <path d="M131.500 4.500h3l2 2v5.500h-5z" fill="none" stroke="#fff" strokeWidth="1.500" />
      <path d="M147 5l9 9" stroke="#b08a50" strokeWidth="2" />
      <path d="M147 0l1.500 3.500L152 4l-3 2 1 4-3-2-3 2 1-4-3-2 3.500-.5z" fill="#ffc531" />
      <circle cx="167" cy="6" r="4.500" fill="#9da1a7" stroke="#dcdcdc" />
      <circle cx="167" cy="6" r="1.800" fill="#3a3a3a" />
      <path d="M169 13c4 0 5-2 5-5M172 15c4-1 5-3 5-6" fill="none" stroke="#b9c9e4" />
    </svg>
  )
}

function Taskbar() {
  const tasks = [
    { label: 'FUCNION O - Paint', icon: <PaintIcon /> },
    { label: 'Libro1', icon: <ExcelIcon />, on: true },
    { label: 'OTROS DOCUMEN...', icon: <ExplorerIcon /> },
    { label: 'Libro1', icon: <ExcelIcon /> },
    { label: 'dana', icon: <ExplorerIcon /> },
  ]
  return (
    <footer className="flex h-7 shrink-0 items-stretch border-t border-[#777] bg-linear-to-b from-[#5c5c5c] via-[#262626] via-55% to-[#050505] text-[11px] text-white">
      <button type="button" aria-label="Inicio de Windows" className="flex w-12 shrink-0 items-center justify-center">
        <Icon w={18} h={17}>
          <path d="M3 2c2-1.500 4-1 6 0L8 8c-2-1-4-1.500-6 0z" fill="#e8602c" />
          <path d="M10 2.500c2 1 4 1 6.500 0L15 9c-2 1-4 1-6 0z" fill="#7cba3a" />
          <path d="M2 9c2-1.500 4-1 6 0l-1 6c-2-1-4-1.500-6 0z" fill="#4b8fe2" />
          <path d="M9 10c2 1 4 1 6 0l-1.500 6c-2 1-4 1-6 0z" fill="#f8c537" />
        </Icon>
      </button>
      <div className="flex min-w-0 gap-0.5">
        {tasks.map(({ label, icon, on }, i) => (
          <button
            key={i}
            type="button"
            className={clsx(
              'my-px flex w-[143px] min-w-0 items-center gap-[3px] rounded-sm border pl-2 whitespace-nowrap',
              on
                ? 'border-[#3a3a3a] bg-black'
                : 'border-[#4a4a4a] bg-linear-to-b from-[#5a5a5a] via-[#2b2b2b] to-[#0a0a0a]',
            )}
          >
            {icon}
            {label}
          </button>
        ))}
      </div>
      <div className="ml-auto flex items-center gap-1 pr-3.5">
        <TrayIcons />
        <time className="whitespace-nowrap">18:51</time>
      </div>
    </footer>
  )
}

export default function App() {
  return (
    <div className={clsx('relative flex h-screen flex-col overflow-hidden bg-[#505050]', UI_FONT)}>
      <TitleBar />
      <TabStrip />
      <button
        type="button"
        aria-label="Botón de Office"
        className="absolute top-1 left-[3px] flex size-9 items-center justify-center rounded-full border border-[#8d8d8d] bg-radial from-white via-[#ececec] to-[#b9b9b9]"
      >
        <OfficeLogo />
      </button>
      <div className="flex h-[90px] shrink-0 gap-[3px] overflow-hidden border-b border-[#8a8d90] bg-[#d0d3d9] pt-[3px] pl-[3px]">
        <Clipboard />
        <FontGroup />
        <AlignGroup />
        <NumberGroup />
        <StylesGroup />
        <CellsGroup />
        <EditGroup />
      </div>
      <FormulaBar />
      <div className="h-[3px] shrink-0 bg-[#d6d8dc]" />
      <div className="flex min-h-0 flex-1">
        <Worksheet />
        <VerticalScroll />
      </div>
      <SheetTabs />
      <StatusBar />
      <Taskbar />
    </div>
  )
}
